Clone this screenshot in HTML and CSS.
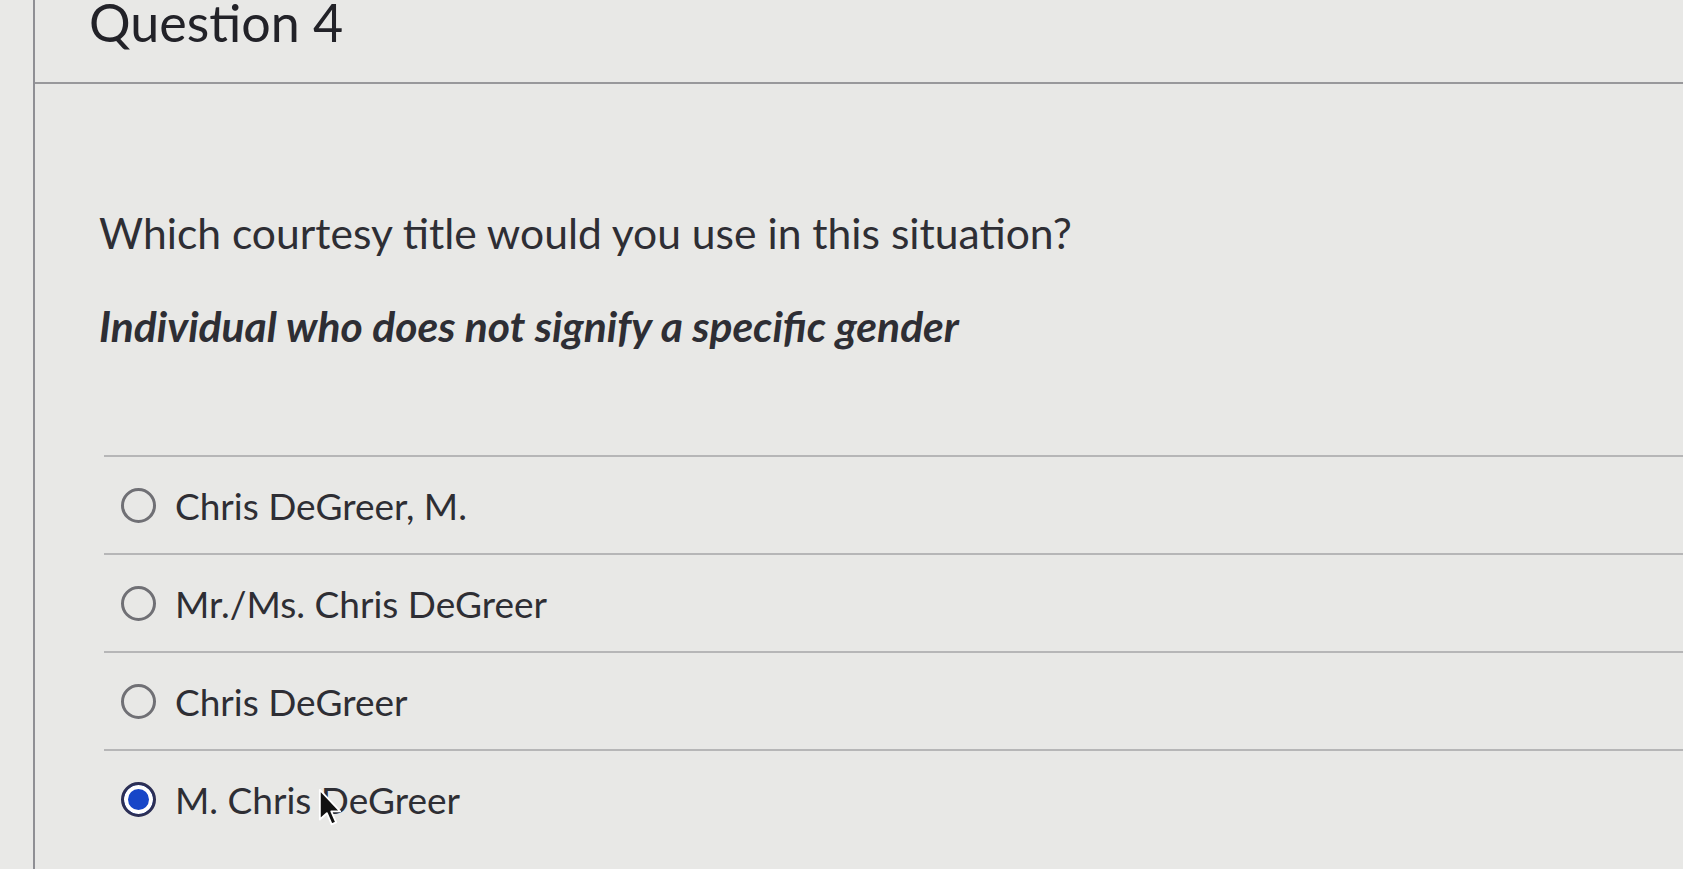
FILE: index.html
```html
<!DOCTYPE html>
<html>
<head>
    <title>Question 4</title>
    <link rel="stylesheet" href="styles.css">
</head>
<body>
    <div class="page">
        <div class="gutter"></div>
        <div class="main">
            <div class="q-header">
                <h1 class="q-title">Question 4</h1>
            </div>

            <div class="q-body">
                <p class="q-text">Which courtesy title would you use in this situation?</p>
                <p class="q-text q-emph"><strong><em>Individual who does not signify a specific gender</em></strong></p>

                <div class="answers">
                    <label class="answer">
                        <input type="radio" name="q4">
                        <span class="answer-text">Chris DeGreer, M.</span>
                    </label>
                    <label class="answer">
                        <input type="radio" name="q4">
                        <span class="answer-text">Mr./Ms. Chris DeGreer</span>
                    </label>
                    <label class="answer">
                        <input type="radio" name="q4">
                        <span class="answer-text">Chris DeGreer</span>
                    </label>
                    <label class="answer">
                        <input type="radio" name="q4" checked>
                        <span class="answer-text">M. Chris DeGreer</span>
                    </label>
                </div>
            </div>
        </div>
    </div>

    <!-- mouse pointer sitting over the last answer -->
    <svg class="cursor" viewBox="0 0 13 21" width="24" height="39">
        <path d="M1 1 L1 17 L4.8 13.6 L7.4 19.6 L9.8 18.6 L7.2 12.6 L12 12.6 Z" fill="#111" stroke="#fff" stroke-width="1" stroke-linejoin="round"/>
    </svg>
</body>
</html>
```

FILE: styles.css
```css
body { margin: 0; background: #e8e8e6; font-family: Lato, "Open Sans", sans-serif; color: #2e2e34; }
.page { display: flex; min-height: 869px; overflow: hidden; }
.gutter { width: 33px; flex: none; background: #e9e9e7; border-right: 2px solid #8f8f94; }
.main { flex: 1; }

.q-header { height: 82px; border-bottom: 2px solid #98989b; padding-left: 54px; }
.q-title { margin: 0; font-size: 52px; font-weight: 400; line-height: 44px; color: #222228; }

.q-body { padding: 123px 0 0 64px; }
.q-text { margin: 0; font-size: 42.6px; line-height: 1.2; }
.q-emph { margin-top: 42px; }

.answers { margin: 104px 0 0 5px; }
.answer { display: flex; align-items: center; height: 96px; padding-left: 17px; border-top: 2px solid #b6b6b7; cursor: pointer; }
.answer-text { margin-left: 19px; font-size: 37px; }

.answer input { appearance: none; margin: 0; width: 35px; height: 35px; flex: none; border: 3px solid #707075; border-radius: 50%; background: transparent; }
.answer input:checked { border-color: #2c2f55; background: #1746c8; box-shadow: inset 0 0 0 4px #fff; }

.cursor { position: absolute; left: 318px; top: 788px; }
```
